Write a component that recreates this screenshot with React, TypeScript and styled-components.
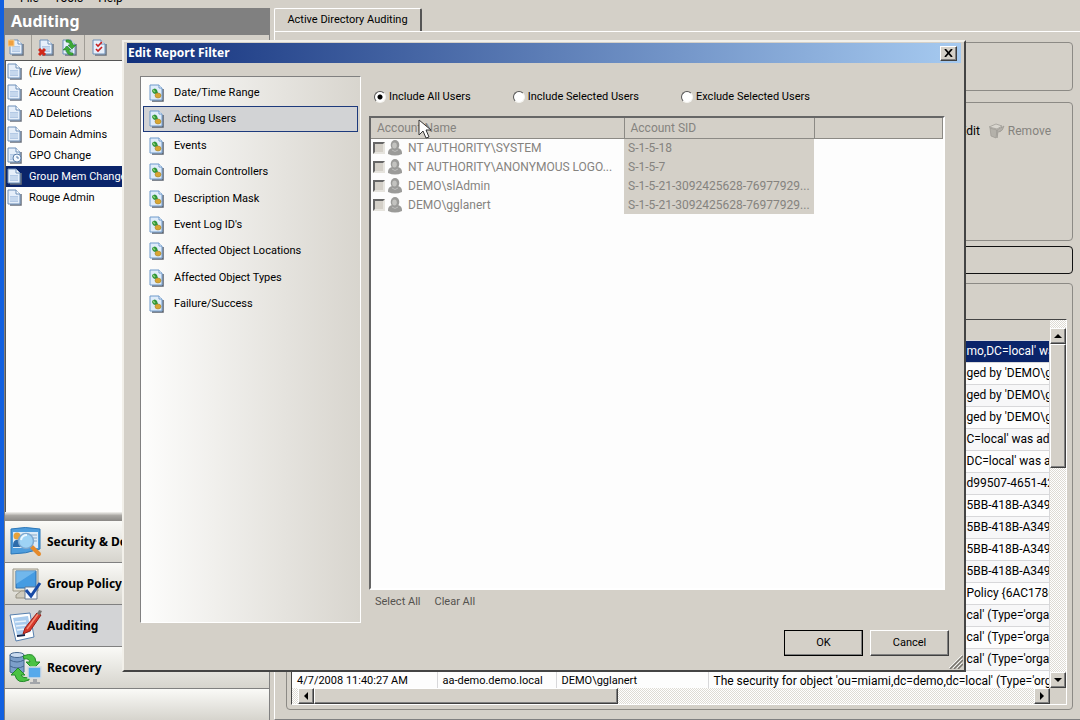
import React from 'react';
import styled, { createGlobalStyle, css } from 'styled-components';

const face = '#d4d0c8';
const uiFont = 'Roboto, "Liberation Sans", Arial, sans-serif';
const boldFont = '"Noto Sans", "Open Sans", Tahoma, sans-serif';

const GlobalStyle = createGlobalStyle`
  *, *::before, *::after { box-sizing: border-box; }
  body { margin: 0; overflow: hidden; background: ${face}; font: 11px/16px ${uiFont}; color: #000; }
  button, input { font: inherit; color: inherit; margin: 0; padding: 0; border: 0; background: none; }
  ul { list-style: none; margin: 0; padding: 0; }
  table { border-collapse: collapse; table-layout: fixed; }
  th, td { padding: 0; font-weight: normal; text-align: left; white-space: nowrap; overflow: hidden; }
`;

const raised = css`
  background: ${face};
  border: 1px solid;
  border-color: #fff #404040 #404040 #fff;
  box-shadow: inset -1px -1px 0 #808080;
`;

const AppWindow = styled.div`
  position: relative;
  display: flex;
  flex-direction: column;
  height: 100vh;
  border-left: 4px solid #1160e0;
`;

const MenuBar = styled.nav`
  display: flex;
  flex: none;
  align-items: flex-end;
  gap: 15px;
  height: 8px;
  padding: 0 16px 3px;
  overflow: hidden;
  font-size: 12px;
`;

const MenuItem = styled.button`
  line-height: 14px;
`;

const Workspace = styled.div`
  display: flex;
  flex: 1;
  min-height: 0;
  gap: 4px;
`;

const Sidebar = styled.aside`
  display: flex;
  flex-direction: column;
  flex: none;
  width: 266px;
  border-left: 1px solid #808080;
  border-right: 1px solid #808080;
`;

const SidebarTitle = styled.h1`
  flex: none;
  height: 27px;
  margin: 0;
  padding-left: 6px;
  background: #808080;
  color: #fff;
  font: bold 16px/27px ${boldFont};
`;

const Toolbar = styled.div`
  display: flex;
  flex: none;
  align-items: center;
  height: 25px;
  padding-left: 3px;
  gap: 6px;
`;

const ToolButton = styled.button`
  display: flex;
`;

const Divider = styled.span`
  width: 1px;
  height: 25px;
  background: #a09d96;
`;

const ReportList = styled.ul`
  flex: 1;
  min-height: 0;
  background: #fdfdfc;
  border: 1px solid #555;
  border-bottom: 0;
`;

const ReportItem = styled.li<{ $active?: boolean; $live?: boolean }>`
  display: flex;
  align-items: center;
  height: 21px;
  gap: 6px;
  white-space: nowrap;
  color: ${p => (p.$active ? '#fff' : '#000')};
  background: ${p => (p.$active ? '#0a246a' : 'transparent')};
  font-style: ${p => (p.$live ? 'italic' : 'normal')};
`;

const Splitter = styled.div`
  display: flex;
  flex: none;
  align-items: center;
  justify-content: center;
  height: 9px;
  background: linear-gradient(#f4f3f0, #a8a6a2 40%, #8a8885);
`;

const NavButton = styled.button<{ $active?: boolean }>`
  display: flex;
  flex: none;
  align-items: center;
  gap: 5px;
  height: 42px;
  padding-left: 4px;
  border-bottom: 1px solid #808080;
  background: ${p => (p.$active ? '#d3d4d6' : 'linear-gradient(#fafaf7, #d6d4cd)')};
  font: bold 12px/16px ${boldFont};
  white-space: nowrap;
`;

const NavFooter = styled.div`
  flex: none;
  height: 31px;
  background: linear-gradient(#fafaf7, #d6d4cd);
`;

const Main = styled.main`
  display: flex;
  flex: 1;
  flex-direction: column;
  min-width: 0;
`;

const Tab = styled.button`
  flex: none;
  align-self: flex-start;
  width: 148px;
  height: 23px;
  border: solid;
  border-width: 1px 2px 0 1px;
  border-color: #fff #555 #fff #fff;
  border-radius: 2px 2px 0 0;
`;

const TabPage = styled.div`
  display: flex;
  flex: 1;
  flex-direction: column;
  min-height: 0;
  padding: 10px 7px 9px 11px;
  border-left: 1px solid #fff;
  border-top: 1px solid #fff;
  border-bottom: 1px solid #808080;
`;

const GroupBox = styled.section<{ $height: number; $gap: number; $dark?: boolean }>`
  flex: none;
  display: flex;
  align-items: flex-start;
  justify-content: flex-end;
  height: ${p => p.$height}px;
  margin-bottom: ${p => p.$gap}px;
  padding: 20px 21px 0 0;
  gap: 8px;
  border: 1px solid ${p => (p.$dark ? '#111' : '#8c8a85')};
  border-radius: 4px;
`;

const LinkButton = styled.button<{ $muted?: boolean }>`
  display: flex;
  align-items: center;
  gap: 3px;
  font-size: 12px;
  color: ${p => (p.$muted ? '#85837e' : '#000')};
`;

const ResultsBox = styled.section`
  display: flex;
  flex: 1;
  flex-direction: column;
  min-height: 0;
  padding: 35px 5px 4px 4px;
  border: 1px solid #8c8a85;
  border-radius: 4px;
`;

const ResultsFrame = styled.div`
  display: grid;
  flex: 1;
  min-height: 0;
  grid-template: minmax(0, 1fr) 16px / minmax(0, 1fr) 16px;
  border: 1px solid #444;
  border-right-color: #fff;
  border-bottom-color: #fff;
`;

const ResultsView = styled.div`
  overflow: hidden;
`;

const ResultsTable = styled.table`
  width: 100%;
  thead tr { height: 20px; background: ${face}; }
`;

const ResultRow = styled.tr<{ $active?: boolean }>`
  height: 22px;
  color: ${p => (p.$active ? '#fff' : '#000')};
  background: ${p => (p.$active ? '#0a246a' : '#fdfdfd')};
  &:nth-child(odd) { background: ${p => (p.$active ? '#0a246a' : '#f7f7f8')}; }
  td { padding-left: 5px; border: 1px solid #d8d8da; border-left: 0; }
`;

const Message = styled.span<{ $long?: boolean }>`
  margin-left: ${p => (p.$long ? 0 : 253)}px;
  font-size: 12px;
`;

const track = css`
  background: repeating-conic-gradient(#fff 0 25%, #dedbd4 0 50%) 0 0 / 2px 2px;
`;

const VerticalBar = styled.div`
  ${track}
  display: flex;
  flex-direction: column;
  padding-top: 8px;
`;

const HorizontalBar = styled.div`
  ${track}
  display: flex;
  padding-left: 6px;
`;

const ScrollButton = styled.button`
  ${raised}
  display: flex;
  flex: none;
  align-items: center;
  justify-content: center;
  width: 16px;
  height: 16px;
`;

const ScrollThumb = styled.div<{ $length: number; $vertical?: boolean }>`
  ${raised}
  flex: 0 0 ${p => p.$length}px;
  margin-${p => (p.$vertical ? 'bottom' : 'right')}: auto;
`;

const Dialog = styled.section`
  position: absolute;
  top: 40px;
  left: 118px;
  right: 114px;
  bottom: 48px;
  display: flex;
  flex-direction: column;
  padding: 1px 3px 3px;
  background: ${face};
  border: 2px solid;
  border-color: #f2f0ea #444 #444 #f2f0ea;
`;

const DialogTitleBar = styled.header`
  display: flex;
  flex: none;
  align-items: center;
  justify-content: space-between;
  height: 20px;
  padding: 0 4px 0 1px;
  color: #fff;
  background: linear-gradient(to right, #12307c, #a6caf0);
`;

const DialogTitle = styled.h2`
  margin: 0;
  font: bold 12px/18px ${boldFont};
`;

const CloseButton = styled.button`
  ${raised}
  display: flex;
  align-items: center;
  justify-content: center;
  width: 17px;
  height: 15px;
`;

const DialogBody = styled.div`
  display: flex;
  flex: 1;
  min-height: 0;
  gap: 8px;
  padding: 13px 16px 0 13px;
`;

const FilterPanel = styled.nav`
  flex: none;
  width: 221px;
  height: 547px;
  padding: 3px 2px;
  background: linear-gradient(to right, #fdfdfc, #d8d5ce);
  border: 1px solid;
  border-color: #808080 #fff #fff #808080;
`;

const FilterList = styled.ul`
  display: flex;
  flex-direction: column;
  justify-content: space-between;
  height: 237px;
`;

const FilterButton = styled.button<{ $active?: boolean }>`
  display: flex;
  align-items: center;
  gap: 9px;
  width: 100%;
  height: 26px;
  padding-left: 4px;
  border: 1px solid ${p => (p.$active ? '#1d3a7c' : 'transparent')};
  background: ${p => (p.$active ? '#d2d3d5' : 'transparent')};
`;

const UsersPane = styled.div`
  display: flex;
  flex: 1;
  flex-direction: column;
  min-width: 0;
`;

const RadioRow = styled.div`
  display: flex;
  flex: none;
  align-items: center;
  gap: 42px;
  height: 40px;
  padding: 1px 0 0 5px;
`;

const RadioLabel = styled.label`
  display: flex;
  align-items: center;
  gap: 3px;
`;

const Radio = styled.input`
  appearance: none;
  width: 12px;
  height: 12px;
  border: 1px solid;
  border-color: #555 #f4f3ef #f4f3ef #555;
  border-radius: 50%;
  background: #fff;
  &:checked { background: radial-gradient(circle, #000 0 2px, #fff 3px); }
`;

const UsersFrame = styled.div`
  flex: none;
  height: 474px;
  background: #fdfdfd;
  border: 2px solid;
  border-color: #666 #fff #fff #666;
`;

const UsersTable = styled.table`
  width: 100%;
  font-size: 12px;
  color: #85837f;
  thead tr { height: 20px; background: ${face}; }
  th { padding-left: 6px; border-right: 1px solid #8c8a85; border-bottom: 1px solid #8c8a85; }
  tbody tr { height: 19px; }
`;

const AccountCell = styled.label`
  display: flex;
  align-items: center;
  padding-left: 2px;
  gap: 2px;
  svg { flex: none; }
  span { padding-left: 3px; }
`;

const SidCell = styled.td`
  padding-left: 4px;
  background: ${face};
`;

const Checkbox = styled.input`
  appearance: none;
  flex: none;
  width: 12px;
  height: 12px;
  background: ${face};
  border: 2px solid;
  border-color: #666 #e6e4de #e6e4de #666;
`;

const SelectionLinks = styled.div`
  display: flex;
  gap: 14px;
  padding: 4px 6px;
  color: #55534f;
`;

const DialogFooter = styled.footer`
  display: flex;
  flex: none;
  justify-content: flex-end;
  gap: 7px;
  padding: 0 12px 11px;
`;

const DialogButton = styled.button<{ $primary?: boolean }>`
  ${raised}
  width: 79px;
  height: 26px;
  outline: ${p => (p.$primary ? '1px solid #000' : 'none')};
  outline-offset: -1px;
`;

const Grip = styled.svg`
  position: absolute;
  right: 1px;
  bottom: 1px;
`;

const Pointer = styled.svg`
  position: absolute;
  left: 414px;
  top: 119px;
`;

const PageIcon = ({ kind = 'plain' }: { kind?: string }) => (
  <svg width="17" height="17" viewBox="0 0 17 17">
    <path d="M4 16h11V5" fill="none" stroke="#69707c" strokeWidth="1.5" />
    <path d="M2 1h8l4 4v10H2z" fill="#e6effa" stroke="#6d8fb8" />
    <path d="M10 1v4h4" fill="#fff" stroke="#6d8fb8" />
    {kind !== 'check' && <path d="M4 7h8v6H4z" fill="#b3c9e5" />}
    {kind !== 'check' && <path d="M4 9h8M4 11h8" stroke="#d8e6f5" />}
    {kind === 'new' && <path d="M0 1h6v6H0z" fill="#f0a040" stroke="#f8cd88" />}
    {kind === 'delete' && <path d="M1 10l6 6M7 10l-6 6" stroke="#d02818" strokeWidth="3" />}
    {kind === 'refresh' && (
      <g fill="#3ba935" stroke="#1d7a24" strokeWidth=".5">
        <path d="M5 1q6-1 7 5h3l-4 4-4-4h2q0-3-4-3z" />
        <path d="M12 16q-6 1-7-5H2l4-4 4 4H8q0 3 4 3z" />
      </g>
    )}
    {kind === 'check' && <path d="M5 5l2 2 4-4M5 10l2 2 4-4" fill="none" stroke="#c92020" strokeWidth="1.6" />}
    {kind === 'clock' && <g fill="#f3f8fe" stroke="#5c7faa"><circle cx="11" cy="11" r="4" /><path d="M11 9v2h2" /></g>}
  </svg>
);

const FilterIcon = () => (
  <svg width="17" height="18" viewBox="0 0 17 18">
    <path d="M4 17h11V5" fill="none" stroke="#58606c" strokeWidth="1.5" />
    <path d="M2 1h9l3 3v12H2z" fill="#dfecfa" stroke="#6f9acb" />
    <path d="M11 1v3h3" fill="#fff" stroke="#6f9acb" />
    <path d="M4 6q3-3 5 0l1 3-3 1q-3-1-3-4z" fill="#2f9638" />
    <path d="M5 6l2 2" stroke="#8fd07c" strokeWidth="1.5" />
    <ellipse cx="10" cy="11.500" rx="3" ry="2.500" fill="#d8a632" stroke="#9c7420" strokeWidth=".5" />
  </svg>
);

const UserIcon = () => (
  <svg width="16" height="16" viewBox="0 0 16 16">
    <path d="M1 13q0-4 4-5h6q4 1 4 5v1q-7 3-14 0z" fill="#9b9b99" />
    <ellipse cx="8" cy="5" rx="4.300" ry="5" fill="#9b9b99" />
    <ellipse cx="7.500" cy="5.500" rx="2.300" ry="3" fill="#c3c3c0" />
    <path d="M5 10q3 3 6 0" fill="none" stroke="#bdbdbb" />
  </svg>
);

const RemoveIcon = () => (
  <svg width="17" height="16" viewBox="0 0 17 16" fill="#b4b1aa" stroke="#9b9892" strokeWidth=".7">
    <path d="M1 4l7-3 6 2-5 3z" fill="#d9d6cf" />
    <path d="M2 5l7 2-1 8-5-2zM9 7l5-3-1 4-3 1-1 6z" />
    <path d="M11 9q4-1 5-6l-3 2" />
  </svg>
);

const SecurityIcon = () => (
  <svg width="33" height="32" viewBox="0 0 33 32">
    <path d="M2 3q14-3 29 0v20q-14 5-29 5z" fill="#4e9ddd" stroke="#2d78b9" />
    <path d="M4 6h25v16H4z" fill="#dcebf7" />
    <path d="M19 9h9M21 12h7M23 15h5" stroke="#87aac9" />
    <circle cx="8" cy="10" r="3.500" fill="#e6a23a" />
    <path d="M4 19q0-6 7-5l3 7H4z" fill="#2e6caa" />
    <path d="M23 21l7 7" stroke="#e58a2b" strokeWidth="4" strokeLinecap="round" />
    <circle cx="17" cy="15" r="7.500" fill="#9ed3f5" stroke="#7fa9d0" strokeWidth="1.500" />
    <path d="M12 14q1-5 6-5" fill="none" stroke="#eaf7ff" strokeWidth="2" />
  </svg>
);

const PolicyIcon = () => (
  <svg width="33" height="32" viewBox="0 0 33 32">
    <path d="M4 1h25v22H4z" fill="#e6e2d4" stroke="#9b9788" />
    <path d="M7 3h20v17H7z" fill="#469ce2" stroke="#2c6eaf" />
    <path d="M7 3h20L7 16z" fill="#8ec9f3" opacity=".6" />
    <path d="M12 23h8v3h4v4H7v-3z" fill="#cecabd" stroke="#989486" />
    <path d="M16 19h12v12H16z" fill="#f5f8fc" stroke="#67798f" />
    <path d="M17 22l5 6 9-13" fill="none" stroke="#174aa6" strokeWidth="3" />
  </svg>
);

const AuditIcon = () => (
  <svg width="33" height="32" viewBox="0 0 33 32">
    <path d="M1 5l20-2 4 24-18 4z" fill="#fff" stroke="#567fae" />
    <path d="M4 8l15-2 3 16-14 3z" fill="#a9cbed" />
    <path d="M6 12l11-1M7 16l10-1M8 20l8-1" stroke="#e7f2fc" strokeWidth="1.500" />
    <path d="M8 26l8-1" stroke="#14264d" strokeWidth="2" />
    <path d="M14 24l2-6L28 3l4 2-11 16z" fill="#d7382a" stroke="#94201a" />
    <path d="M18 19L29 4" stroke="#f58a72" strokeWidth="1.500" />
    <path d="M28 4l2-4 3 1-2 4z" fill="#77736e" />
  </svg>
);

const RecoveryIcon = () => (
  <svg width="33" height="32" viewBox="0 0 33 32">
    <g fill="#7c9fc9" stroke="#45678f">
      <path d="M1 14v6q7 4 14 0v-6z" />
      <path d="M1 8v6q7 4 14 0V8z" />
      <path d="M1 3v5q7 4 14 0V3z" />
      <ellipse cx="8" cy="3" rx="7" ry="2.500" fill="#cadbef" />
    </g>
    <path d="M14 4q12-5 13 6h4l-7 7-7-7h4q-1-4-6-3z" fill="#4bc244" stroke="#238a29" />
    <path d="M20 28q-12 5-14-5H2l7-7 7 7h-4q2 4 8 2z" fill="#4bc244" stroke="#238a29" />
    <path d="M19 15h13v11H19z" fill="#56a9eb" stroke="#d5dce4" strokeWidth="1.500" />
    <path d="M24 27h4v3h3v2H21v-2h3z" fill="#a3a6aa" />
  </svg>
);

const Arrow = ({ d }: { d: string }) => (
  <svg width="8" height="8" viewBox="0 0 8 8"><path d={d} fill="#000" /></svg>
);

const reports = ['(Live View)', 'Account Creation', 'AD Deletions', 'Domain Admins', 'GPO Change', 'Group Mem Changes', 'Rouge Admin'];

const sections = [
  { label: 'Security & Delegation', icon: <SecurityIcon /> },
  { label: 'Group Policy', icon: <PolicyIcon /> },
  { label: 'Auditing', icon: <AuditIcon /> },
  { label: 'Recovery', icon: <RecoveryIcon /> },
];

const filters = ['Date/Time Range', 'Acting Users', 'Events', 'Domain Controllers', 'Description Mask', "Event Log ID's", 'Affected Object Locations', 'Affected Object Types', 'Failure/Success'];

const accounts = [
  ['NT AUTHORITY\\SYSTEM', 'S-1-5-18'],
  ['NT AUTHORITY\\ANONYMOUS LOGO...', 'S-1-5-7'],
  ['DEMO\\slAdmin', 'S-1-5-21-3092425628-76977929...'],
  ['DEMO\\gglanert', 'S-1-5-21-3092425628-76977929...'],
];

const messages = [
  "mo,DC=local' was added",
  "ged by 'DEMO\\gglanert'",
  "ged by 'DEMO\\gglanert'",
  "ged by 'DEMO\\gglanert'",
  "C=local' was added",
  "DC=local' was added",
  'd99507-4651-42e',
  '5BB-418B-A349-',
  '5BB-418B-A349-',
  '5BB-418B-A349-',
  '5BB-418B-A349-',
  'Policy {6AC1786C',
  "cal' (Type='organizationalUnit')",
  "cal' (Type='organizationalUnit')",
  "cal' (Type='organizationalUnit')",
];

function ReportSidebar() {
  return (
    <Sidebar>
      <SidebarTitle>Auditing</SidebarTitle>
      <Toolbar>
        <ToolButton aria-label="New report"><PageIcon kind="new" /></ToolButton>
        <Divider />
        <ToolButton aria-label="Delete report"><PageIcon kind="delete" /></ToolButton>
        <ToolButton aria-label="Refresh"><PageIcon kind="refresh" /></ToolButton>
        <Divider />
        <ToolButton aria-label="Options"><PageIcon kind="check" /></ToolButton>
      </Toolbar>
      <ReportList>
        {reports.map((name, i) => (
          <ReportItem key={name} $live={i === 0} $active={i === 5}>
            <PageIcon kind={i === 4 ? 'clock' : 'plain'} />
            {name}
          </ReportItem>
        ))}
      </ReportList>
      <Splitter><Arrow d="M1 3h3L2 6z" /></Splitter>
      {sections.map(s => (
        <NavButton key={s.label} $active={s.label === 'Auditing'}>{s.icon}{s.label}</NavButton>
      ))}
      <NavFooter />
    </Sidebar>
  );
}

function Results() {
  return (
    <ResultsBox>
      <ResultsFrame>
        <ResultsView>
          <ResultsTable>
            <colgroup><col width="145" /><col width="119" /><col width="152" /><col /></colgroup>
            <thead><tr><th /><th /><th /><th /></tr></thead>
            <tbody>
              {messages.map((m, i) => (
                <ResultRow key={i} $active={i === 0}>
                  <td /><td /><td />
                  <td><Message>{m}</Message></td>
                </ResultRow>
              ))}
              <ResultRow>
                <td>4/7/2008 11:40:27 AM</td>
                <td>aa-demo.demo.local</td>
                <td>DEMO\gglanert</td>
                <td><Message $long>The security for object 'ou=miami,dc=demo,dc=local' (Type='organizationalUnit')</Message></td>
              </ResultRow>
            </tbody>
          </ResultsTable>
        </ResultsView>
        <VerticalBar>
          <ScrollButton aria-label="Scroll up"><Arrow d="M0 6h8L4 2z" /></ScrollButton>
          <ScrollThumb $vertical $length={124} />
          <ScrollButton aria-label="Scroll down"><Arrow d="M0 2h8L4 6z" /></ScrollButton>
        </VerticalBar>
        <HorizontalBar>
          <ScrollButton aria-label="Scroll left"><Arrow d="M6 0v8L2 4z" /></ScrollButton>
          <ScrollThumb $length={304} />
          <ScrollButton aria-label="Scroll right"><Arrow d="M2 0v8l4-4z" /></ScrollButton>
        </HorizontalBar>
      </ResultsFrame>
    </ResultsBox>
  );
}

function FilterDialog() {
  return (
    <Dialog role="dialog" aria-labelledby="filter-title">
      <DialogTitleBar>
        <DialogTitle id="filter-title">Edit Report Filter</DialogTitle>
        <CloseButton aria-label="Close">
          <svg width="9" height="8" viewBox="0 0 9 8"><path d="M1 0l7 8M8 0L1 8" stroke="#000" strokeWidth="1.700" /></svg>
        </CloseButton>
      </DialogTitleBar>
      <DialogBody>
        <FilterPanel>
          <FilterList>
            {filters.map((f, i) => (
              <li key={f}><FilterButton $active={i === 1}><FilterIcon />{f}</FilterButton></li>
            ))}
          </FilterList>
        </FilterPanel>
        <UsersPane>
          <RadioRow>
            {['Include All Users', 'Include Selected Users', 'Exclude Selected Users'].map((r, i) => (
              <RadioLabel key={r}><Radio type="radio" name="scope" defaultChecked={i === 0} />{r}</RadioLabel>
            ))}
          </RadioRow>
          <UsersFrame>
            <UsersTable>
              <colgroup><col width="253" /><col width="190" /><col /></colgroup>
              <thead><tr><th>Account Name</th><th>Account SID</th><th /></tr></thead>
              <tbody>
                {accounts.map(([name, sid]) => (
                  <tr key={name}>
                    <td><AccountCell><Checkbox type="checkbox" disabled /><UserIcon /><span>{name}</span></AccountCell></td>
                    <SidCell>{sid}</SidCell>
                    <td />
                  </tr>
                ))}
              </tbody>
            </UsersTable>
          </UsersFrame>
          <SelectionLinks><button disabled>Select All</button><button disabled>Clear All</button></SelectionLinks>
        </UsersPane>
      </DialogBody>
      <DialogFooter>
        <DialogButton $primary>OK</DialogButton>
        <DialogButton>Cancel</DialogButton>
      </DialogFooter>
      <Grip width="14" height="14" viewBox="0 0 14 14">
        <path d="M1 14L14 1M5 14l9-9M9 14l5-5" stroke="#77746e" strokeWidth="1.500" />
        <path d="M0 13L13 0M4 13l9-9M8 13l5-5" stroke="#fff" strokeWidth=".8" />
      </Grip>
    </Dialog>
  );
}

export default function App() {
  return (
    <>
      <GlobalStyle />
      <AppWindow>
        <MenuBar><MenuItem>File</MenuItem><MenuItem>Tools</MenuItem><MenuItem>Help</MenuItem></MenuBar>
        <Workspace>
          <ReportSidebar />
          <Main>
            <Tab>Active Directory Auditing</Tab>
            <TabPage>
              <GroupBox $height={49} $gap={11} />
              <GroupBox $height={139} $gap={5}>
                <LinkButton>Edit</LinkButton>
                <LinkButton $muted disabled><RemoveIcon />Remove</LinkButton>
              </GroupBox>
              <GroupBox $height={28} $gap={9} $dark />
              <Results />
            </TabPage>
          </Main>
        </Workspace>
        <FilterDialog />
        <Pointer width="13" height="21" viewBox="0 0 13 21">
          <path d="M1 1v15l4-4 3 7 3-1-3-7h5z" fill="#fff" stroke="#333" />
        </Pointer>
      </AppWindow>
    </>
  );
}
